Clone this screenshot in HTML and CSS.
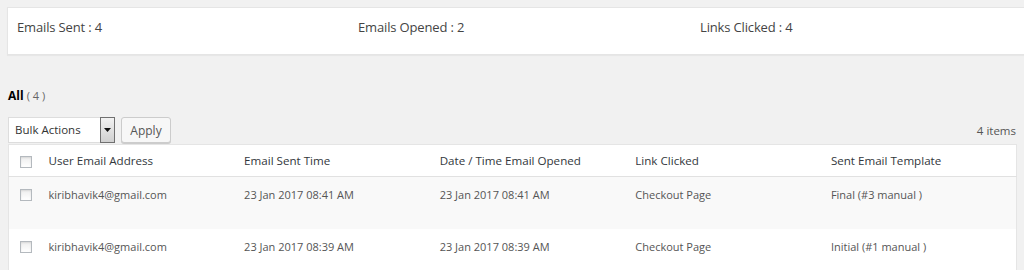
FILE: index.html
```html
<!DOCTYPE html>
<html>
<head>
<meta charset="utf-8">
<link rel="stylesheet" href="styles.css">
</head>
<body>
<div class="stats">
  <div class="stat">Emails Sent : 4</div>
  <div class="stat">Emails Opened : 2</div>
  <div class="stat">Links Clicked : 4</div>
</div>
<div class="views"><b>All</b> <span class="count">( 4 )</span></div>
<div class="tablenav">
  <div class="actions">
    <div class="select"><span class="sel-label">Bulk Actions</span><span class="sel-arrow"><svg width="7" height="4" viewBox="0 0 7 4"><path d="M0 0h7L3.5 4z" fill="#111"/></svg></span></div>
    <button class="btn">Apply</button>
  </div>
  <div class="items">4 items</div>
</div>
<table class="list">
  <thead>
    <tr>
      <th class="cb"><span class="check"></span></th>
      <th>User Email Address</th>
      <th>Email Sent Time</th>
      <th>Date / Time Email Opened</th>
      <th>Link Clicked</th>
      <th>Sent Email Template</th>
    </tr>
  </thead>
  <tbody>
    <tr class="alt tall">
      <td class="cb"><span class="check"></span></td>
      <td>kiribhavik4@gmail.com</td>
      <td>23 Jan 2017 08:41 AM</td>
      <td>23 Jan 2017 08:41 AM</td>
      <td>Checkout Page</td>
      <td>Final (#3 manual )</td>
    </tr>
    <tr>
      <td class="cb"><span class="check"></span></td>
      <td>kiribhavik4@gmail.com</td>
      <td>23 Jan 2017 08:39 AM</td>
      <td>23 Jan 2017 08:39 AM</td>
      <td>Checkout Page</td>
      <td>Initial (#1 manual )</td>
    </tr>
  </tbody>
</table>
</body>
</html>
```
FILE: styles.css
```css
* { box-sizing: border-box; }
html, body { margin: 0; padding: 0; }
body {
  background: #f1f1f1;
  font-family: "Open Sans", "Liberation Sans", sans-serif;
  color: #444;
  padding: 7px 0 0 8px;
  overflow: hidden;
  height: 270px;
}
.stats {
  display: grid;
  grid-template-columns: 341px 342px 341px;
  margin-left: -1px;
  width: 1030px;
  height: 48px;
  background: #fff;
  border: 1px solid #e5e5e5;
  box-shadow: 0 1px 1px rgba(0,0,0,.04);
  padding: 0 0 0 9px;
  align-items: center;
  font-size: 13px;
  color: #444;
  letter-spacing: -0.15px;
}
.stat { line-height: 20px; padding-bottom: 8px; }
.views {
  margin-top: 33px;
  font-size: 12px;
  line-height: 16px;
  color: #000;
}
.views b { font-weight: 700; }
.views .count { color: #666; font-size: 11px; }
.tablenav {
  display: flex;
  justify-content: space-between;
  align-items: center;
  margin-top: 13px;
  width: 1009px;
  height: 26px;
}
.actions { display: flex; align-items: center; gap: 6px; }
.select {
  display: flex;
  width: 107px;
  height: 26px;
  background: #fff;
  border: 1px solid #ddd;
  font-size: 11.5px;
  color: #333;
}
.sel-label { flex: 1; padding-left: 6px; line-height: 24px; }
.sel-arrow {
  width: 15px;
  margin: -1px -1px -1px 0;
  border: 1px solid #707070;
  background: linear-gradient(#f2f2f2, #d0d0d0);
  display: flex;
  align-items: center;
  justify-content: center;
}
.btn {
  width: 50px;
  height: 26px;
  background: #f7f7f7;
  border: 1px solid #ccc;
  border-radius: 3px;
  box-shadow: 0 1px 0 #ccc;
  font: inherit;
  font-size: 12px;
  color: #555;
  padding: 0;
}
.items { font-size: 11.5px; color: #555; padding-right: 1px; }
.list {
  margin-top: 1px;
  width: 1009px;
  border-collapse: collapse;
  table-layout: fixed;
  background: #fff;
  border: 1px solid #e5e5e5;
  font-size: 11px;
}
.list th, .list td { text-align: left; padding: 0 10px; vertical-align: top; }
.list th.cb, .list td.cb { width: 30px; padding: 0 0 0 11px; }
.list thead th {
  height: 32px;
  font-weight: 400;
  color: #32373c;
  font-size: 11.6px;
  vertical-align: middle;
  border-bottom: 1px solid #e1e1e1;
}
.list thead th.cb { padding-top: 2px; }
.list td { color: #555; padding-top: 9px; line-height: 17px; }
.list tr.alt { background: #f9f9f9; }
.list tr.tall td { height: 52px; }
.list tr td { height: 42px; }
.check {
  display: block;
  width: 12px;
  height: 12px;
  border: 1px solid #b4b9be;
  background: linear-gradient(#eee, #fff);
  box-shadow: inset 0 1px 2px rgba(0,0,0,.1);
}
.list td .check { margin-top: 12px; }
```
